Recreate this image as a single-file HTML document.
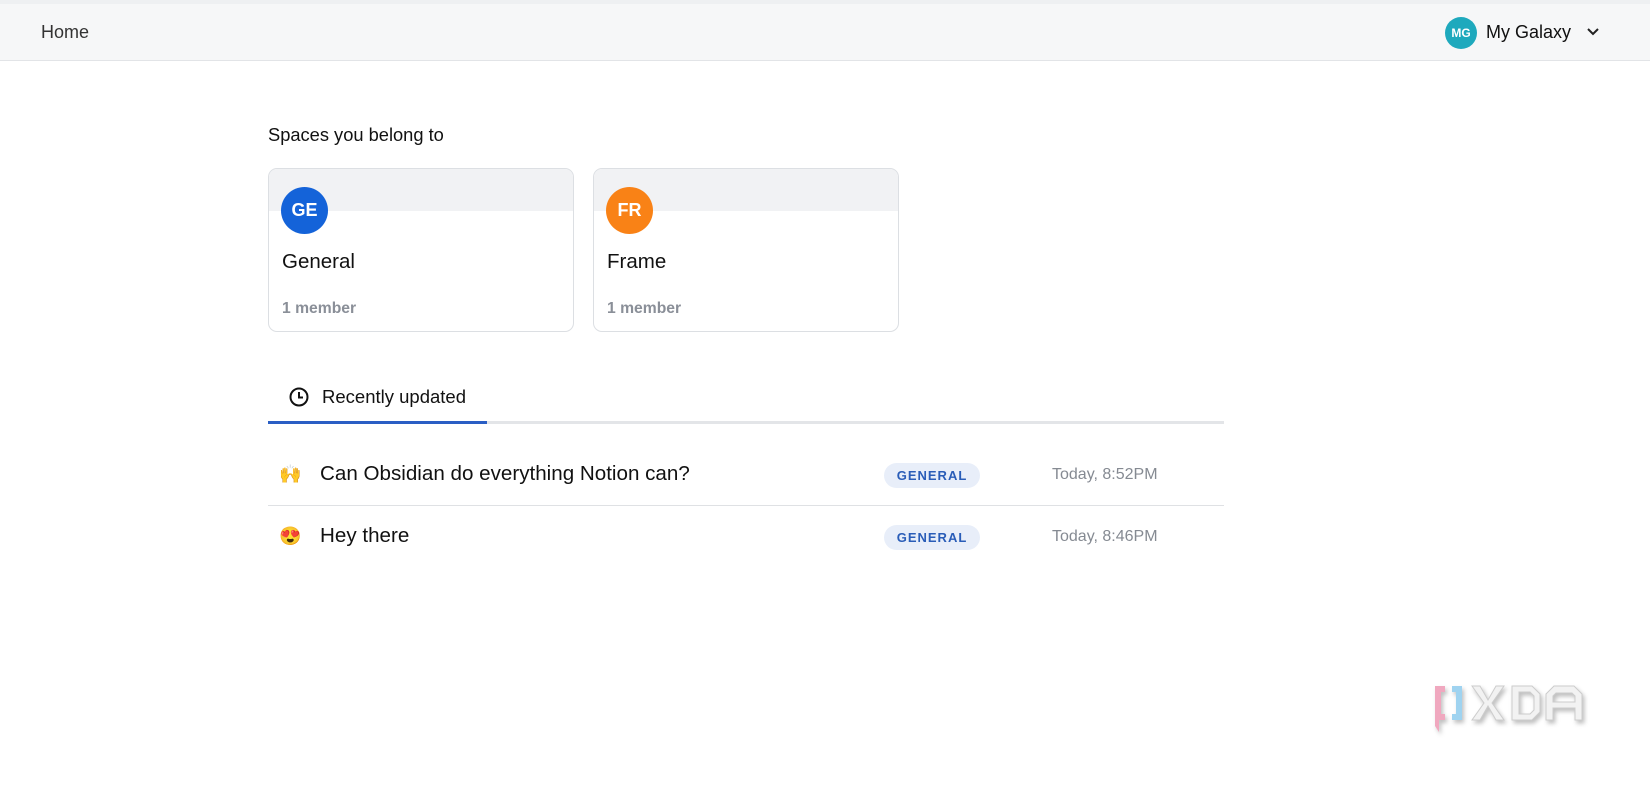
<!DOCTYPE html>
<html><head><meta charset="utf-8"><style>
*{margin:0;padding:0;box-sizing:border-box}
body{width:1650px;height:793px;background:#fff;font-family:"Liberation Sans",Arial,sans-serif;color:#111;position:relative;overflow:hidden}
.a{position:absolute}
.hdr{left:0;top:0;width:1650px;height:61px;background:#f6f7f8;border-bottom:1px solid #e2e4e7;border-top:4px solid #eef0f2}
.card{width:306px;height:164px;border:1px solid #dcdfe3;border-radius:9px;overflow:hidden;background:#fff}
.card .top{height:42px;background:#f1f2f4}
.av{width:47px;height:47px;border-radius:50%;color:#fff;font-weight:bold;font-size:18px;display:flex;align-items:center;justify-content:center;position:absolute;left:12px;top:18px}
.card .nm{position:absolute;left:13px;top:81px;font-size:20.5px}
.card .mb{position:absolute;left:13px;top:131px;font-size:15.7px;color:#8a8f98;font-weight:bold}
.badge{width:96px;height:25px;border-radius:13px;background:#e8eef9;color:#2a5db8;font-size:13px;font-weight:bold;letter-spacing:1px;display:flex;align-items:center;justify-content:center}
.t{font-size:20.6px}
.tm{font-size:16px;color:#858a92}
</style></head><body>
<div class="a hdr"></div>
<div class="a" style="left:41px;top:22px;font-size:18px;color:#333">Home</div>
<div class="a" style="left:1445px;top:17px;width:32px;height:32px;border-radius:50%;background:#1ea9bd;color:#fff;font-size:12px;font-weight:bold;display:flex;align-items:center;justify-content:center">MG</div>
<div class="a" style="left:1486px;top:22px;font-size:18px">My Galaxy</div>
<svg class="a" style="left:1586px;top:27px" width="14" height="10" viewBox="0 0 14 10"><path d="M2 2l5 5 5-5" fill="none" stroke="#222" stroke-width="2"/></svg>
<div class="a" style="left:268px;top:124px;font-size:18.3px">Spaces you belong to</div>
<div class="a card" style="left:268px;top:168px"><div class="top"></div><div class="av" style="background:#1463d9">GE</div><div class="nm">General</div><div class="mb">1 member</div></div>
<div class="a card" style="left:593px;top:168px"><div class="top"></div><div class="av" style="background:#f98216">FR</div><div class="nm">Frame</div><div class="mb">1 member</div></div>
<svg class="a" style="left:288px;top:386px" width="22" height="22" viewBox="0 0 22 22"><circle cx="11" cy="11" r="8.5" fill="none" stroke="#111" stroke-width="2"/><path d="M11 6v5.5h4" fill="none" stroke="#111" stroke-width="2"/></svg>
<div class="a" style="left:322px;top:386px;font-size:18.5px">Recently updated</div>
<div class="a" style="left:268px;top:421px;width:956px;height:3px;background:#e3e5e8"></div>
<div class="a" style="left:268px;top:421px;width:219px;height:3px;background:#2a5ec4"></div>
<div class="a" style="left:279px;top:464px;font-size:18px">🙌</div>
<div class="a t" style="left:320px;top:462px">Can Obsidian do everything Notion can?</div>
<div class="a badge" style="left:884px;top:463px">GENERAL</div>
<div class="a tm" style="left:1052px;top:466px">Today, 8:52PM</div>
<div class="a" style="left:268px;top:505px;width:956px;height:1px;background:#dfe1e4"></div>
<div class="a" style="left:279px;top:526px;font-size:18px">😍</div>
<div class="a t" style="left:320px;top:524px">Hey there</div>
<div class="a badge" style="left:884px;top:525px">GENERAL</div>
<div class="a tm" style="left:1052px;top:528px">Today, 8:46PM</div>
<svg class="a" style="left:1430px;top:680px;filter:drop-shadow(2px 3px 2px rgba(0,0,0,.25))" width="160" height="56" viewBox="0 0 160 56">
<path d="M5 6h10v6h-4v22h4v6h-6v12l-4-6z" fill="#f0a8bf"/>
<path d="M22 6h10v34h-10v-6h4v-22h-4z" fill="#9fd3f0"/>
<path d="M42 6h8l8 14 8-14h8l-12 17 12 17h-8l-8-14-8 14h-8l12-17z" fill="#f2f2f2" stroke="#ccc"/>
<path d="M82 6h20l8 8v18l-8 8h-20zM89 12v22h11l4-4v-14l-4-4z" fill="#f2f2f2" stroke="#ccc"/>
<path d="M116 40v-26l8-8h20l8 8v26h-7v-12h-22v12zM123 22h22v-6l-3-3h-16l-3 3z" fill="#f2f2f2" stroke="#ccc"/>
</svg>
</body></html>
